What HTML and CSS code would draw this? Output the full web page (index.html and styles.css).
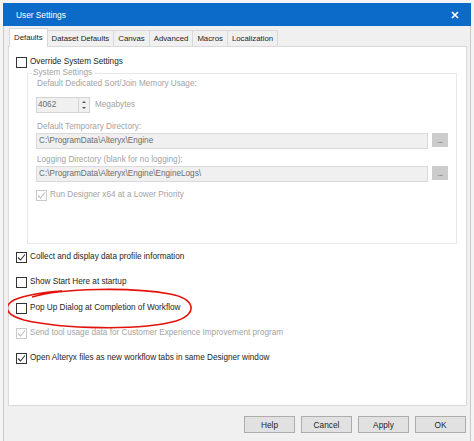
FILE: index.html
```html
<!DOCTYPE html>
<html lang="en">
<head>
<meta charset="UTF-8">
<title>User Settings</title>
<link rel="stylesheet" href="styles.css">
</head>
<body>
<div class="window">
  <div class="titlebar">
    <span class="title">User Settings</span>
    <svg class="close" width="8" height="8" viewBox="0 0 8 8"><path d="M1 1 L7 7 M7 1 L1 7" stroke="#fff" stroke-width="1.7"/></svg>
  </div>

  <div class="win-body">
    <div class="tabs">
      <div class="tab active">Defaults</div>
      <div class="tab">Dataset Defaults</div>
      <div class="tab">Canvas</div>
      <div class="tab">Advanced</div>
      <div class="tab">Macros</div>
      <div class="tab">Localization</div>
    </div>

    <div class="panel">
      <div class="check-row first">
        <span class="box"></span>
        <span>Override System Settings</span>
      </div>

      <fieldset class="group">
        <legend>System Settings</legend>
        <div class="label">Default Dedicated Sort/Join Memory Usage:</div>
        <div class="spin-row">
          <div class="spin">
            <span class="spin-val">4062</span>
            <span class="spin-btns">
              <span class="arrow up"></span>
              <span class="arrow down"></span>
            </span>
          </div>
          <span class="label">Megabytes</span>
        </div>
        <div class="label gap8">Default Temporary Directory:</div>
        <div class="field-row">
          <div class="field">C:\ProgramData\Alteryx\Engine</div>
          <div class="browse">...</div>
        </div>
        <div class="label gap5">Logging Directory (blank for no logging):</div>
        <div class="field-row">
          <div class="field">C:\ProgramData\Alteryx\Engine\EngineLogs\</div>
          <div class="browse">...</div>
        </div>
        <div class="check-row disabled run">
          <span class="box"><svg width="9" height="9" viewBox="0 0 9 9"><path d="M1 4.5 L3.5 7 L8 1.5" fill="none" stroke="#bdbdbd" stroke-width="1.1"/></svg></span>
          <span>Run Designer x64 at a Lower Priority</span>
        </div>
      </fieldset>

      <div class="check-row gap7">
        <span class="box"><svg width="9" height="9" viewBox="0 0 9 9"><path d="M1 4.5 L3.5 7 L8 1.5" fill="none" stroke="#333" stroke-width="1.1"/></svg></span>
        <span>Collect and display data profile information</span>
      </div>
      <div class="check-row gap13">
        <span class="box"></span>
        <span>Show Start Here at startup</span>
      </div>
      <div class="check-row gap14">
        <span class="box"></span>
        <span>Pop Up Dialog at Completion of Workflow</span>
      </div>
      <div class="check-row disabled gap13">
        <span class="box"><svg width="9" height="9" viewBox="0 0 9 9"><path d="M1 4.5 L3.5 7 L8 1.5" fill="none" stroke="#bdbdbd" stroke-width="1.1"/></svg></span>
        <span>Send tool usage data for Customer Experience Improvement program</span>
      </div>
      <div class="check-row gap13">
        <span class="box"><svg width="9" height="9" viewBox="0 0 9 9"><path d="M1 4.5 L3.5 7 L8 1.5" fill="none" stroke="#333" stroke-width="1.1"/></svg></span>
        <span>Open Alteryx files as new workflow tabs in same Designer window</span>
      </div>

      <!-- red marker drawn over the screenshot -->
      <svg class="marker" width="459" height="360" viewBox="8 46 459 360">
        <path d="M32 297 C62 288, 132 287, 170 294 C196 299, 198 314, 176 321 C140 331, 62 329, 24 320 C5 315, 3 306, 14 300 C26 295, 46 292, 62 291" fill="none" stroke="#e3120b" stroke-width="1.6"/>
      </svg>
    </div>

    <div class="buttons">
      <button>Help</button>
      <button>Cancel</button>
      <button>Apply</button>
      <button>OK</button>
    </div>
  </div>
</div>
</body>
</html>
```

FILE: styles.css
```css
html, body {
margin: 0;
padding: 0;
background: #f4f4f4;
}
body {
font-family: "Liberation Sans", Arial, sans-serif;
font-size: 8.2px;
color: #1e1e1e;
}
.window {
margin: 3px 3px 0 3px;
height: 438px;
display: flex;
flex-direction: column;
}
.titlebar {
height: 23px;
background: #0c6bc8;
display: flex;
align-items: center;
justify-content: space-between;
padding: 0 12px 0 13px;
}
.title {
color: #fff;
font-size: 8.3px;
}
.win-body {
flex: 1;
background: #f0f0f0;
border-left: 1px solid #c9c9c9;
border-right: 1px solid #c9c9c9;
}

/* tabs */
.tabs {
display: flex;
align-items: flex-end;
height: 18px;
margin-top: 2px;
padding-left: 5px;
}
.tab {
height: 16px;
box-sizing: border-box;
padding: 0 4px;
font-size: 7.8px;
line-height: 15px;
background: #f0f0f0;
border: 1px solid #d9d9d9;
border-bottom: none;
margin-left: -1px;
}
.tab.active {
height: 19px;
line-height: 17px;
background: #fff;
margin-bottom: -1px;
margin-left: 0;
position: relative;
z-index: 1;
}

/* white tab page */
.panel {
position: relative;
height: 360px;
box-sizing: border-box;
margin: 0 3px 0 4px;
padding-left: 7px;
background: #fff;
border: 1px solid #d9d9d9;
}
.check-row {
display: flex;
align-items: center;
gap: 3px;
height: 12px;
line-height: 12px;
}
.check-row.first { margin-top: 9px; }
.gap7 { margin-top: 7px; }
.gap13 { margin-top: 13px; }
.gap14 { margin-top: 14px; }
.box {
width: 11px;
height: 11px;
box-sizing: border-box;
border: 1px solid #333;
background: #fff;
display: flex;
align-items: center;
justify-content: center;
}
.check-row.disabled { color: #a3a3a3; }
.check-row.disabled .box { border-color: #cacaca; }

/* system settings group */
.group {
margin: 0 9px 0 11px;
padding: 0 0 42px 9px;
border: 1px solid #e8e8e8;
color: #a3a3a3;
}
.group legend {
line-height: 10px;
padding: 0 1px;
margin-left: -5px;
color: #a3a3a3;
}
.label {
line-height: 12px;
color: #a3a3a3;
}
.gap8 { margin-top: 8px; }
.gap5 { margin-top: 5px; }
.spin-row {
display: flex;
align-items: center;
gap: 5px;
margin: 7px 0 0 -1px;
}
.spin {
width: 54px;
height: 16px;
box-sizing: border-box;
border: 1px solid #d4d4d4;
background: #f0f0f0;
display: flex;
}
.spin-val {
flex: 1;
padding-left: 1px;
line-height: 13px;
color: #6d6d6d;
}
.spin-btns {
width: 10px;
border-left: 1px solid #d4d4d4;
display: flex;
flex-direction: column;
align-items: center;
justify-content: space-evenly;
}
.arrow {
width: 0;
height: 0;
border-left: 2px solid transparent;
border-right: 2px solid transparent;
}
.arrow.up { border-bottom: 2px solid #555; }
.arrow.down { border-top: 2px solid #555; }
.field-row {
display: flex;
align-items: flex-start;
gap: 4px;
margin-left: -1px;
}
.field {
width: 392px;
height: 16px;
box-sizing: border-box;
border: 1px solid #dadada;
background: #f0f0f0;
padding-left: 2px;
line-height: 14px;
color: #6d6d6d;
}
.browse {
width: 16px;
height: 14px;
background: #cccccc;
color: #8a8a8a;
text-align: center;
font-size: 8px;
letter-spacing: -0.5px;
line-height: 16px;
font-weight: bold;
}
.check-row.run {
margin: 7px 0 0 -1px;
}

.marker {
position: absolute;
left: -1px;
top: -1px;
pointer-events: none;
}

/* bottom buttons */
.buttons {
display: flex;
justify-content: flex-end;
gap: 6px;
margin-top: 10px;
padding-right: 4px;
}
.buttons button {
width: 51px;
height: 17px;
padding: 0;
font-family: "Liberation Sans", Arial, sans-serif;
font-size: 8.3px;
color: #1e1e1e;
background: #e1e1e1;
border: 1px solid #adadad;
}
```
